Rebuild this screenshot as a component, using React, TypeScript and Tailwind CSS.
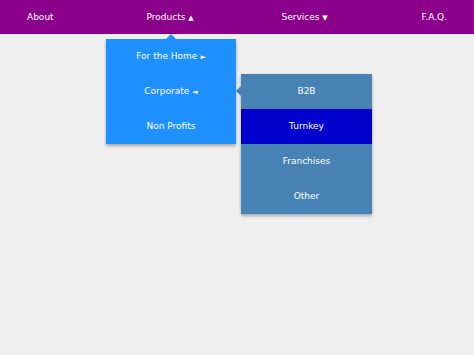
import React from 'react';

const font = { fontFamily: '"DejaVu Sans", Verdana, sans-serif' };

export default function App() {
  return (
    <div className="w-[474px] h-[355px] bg-[#efefef] relative overflow-hidden text-[9px] text-white" style={font}>
      <nav className="h-[34px] bg-[#8b008b] flex items-center justify-between px-[27px] pt-[2px]">
        <span>About</span>
        <span className="ml-[5px]">Products <span className="text-[7px]">▲</span></span>
        <span className="mr-[6px]">Services <span className="text-[7px]">▼</span></span>
        <span>F.A.Q.</span>
      </nav>

      {/* Products dropdown */}
      <div className="absolute left-[106px] top-[39px] w-[130px] bg-[#1e90ff] shadow-[0_2px_3px_rgba(0,0,0,0.3)]">
        <div className="absolute -top-[5px] left-[60px] w-0 h-0 border-x-[5px] border-x-transparent border-b-[5px] border-b-[#1e90ff]" />
        <div className="h-[35px] flex items-center justify-center pt-[1px]">For the Home <span className="ml-[3px] text-[7px]">►</span></div>
        <div className="h-[35px] flex items-center justify-center pt-[1px]">Corporate <span className="ml-[3px] text-[7px]">◄</span></div>
        <div className="h-[35px] flex items-center justify-center pt-[1px]">Non Profits</div>
      </div>

      {/* Corporate submenu */}
      <div className="absolute left-[241px] top-[74px] w-[131px] bg-[#4682b4] shadow-[0_2px_3px_rgba(0,0,0,0.3)]">
        <div className="absolute top-[12px] -left-[5px] w-0 h-0 border-y-[5px] border-y-transparent border-r-[5px] border-r-[#4682b4]" />
        <div className="h-[35px] flex items-center justify-center pt-[1px]">B2B</div>
        <div className="h-[35px] flex items-center justify-center pt-[1px] bg-[#0000cd]">Turnkey</div>
        <div className="h-[35px] flex items-center justify-center pt-[1px]">Franchises</div>
        <div className="h-[35px] flex items-center justify-center pt-[1px]">Other</div>
      </div>
    </div>
  );
}
